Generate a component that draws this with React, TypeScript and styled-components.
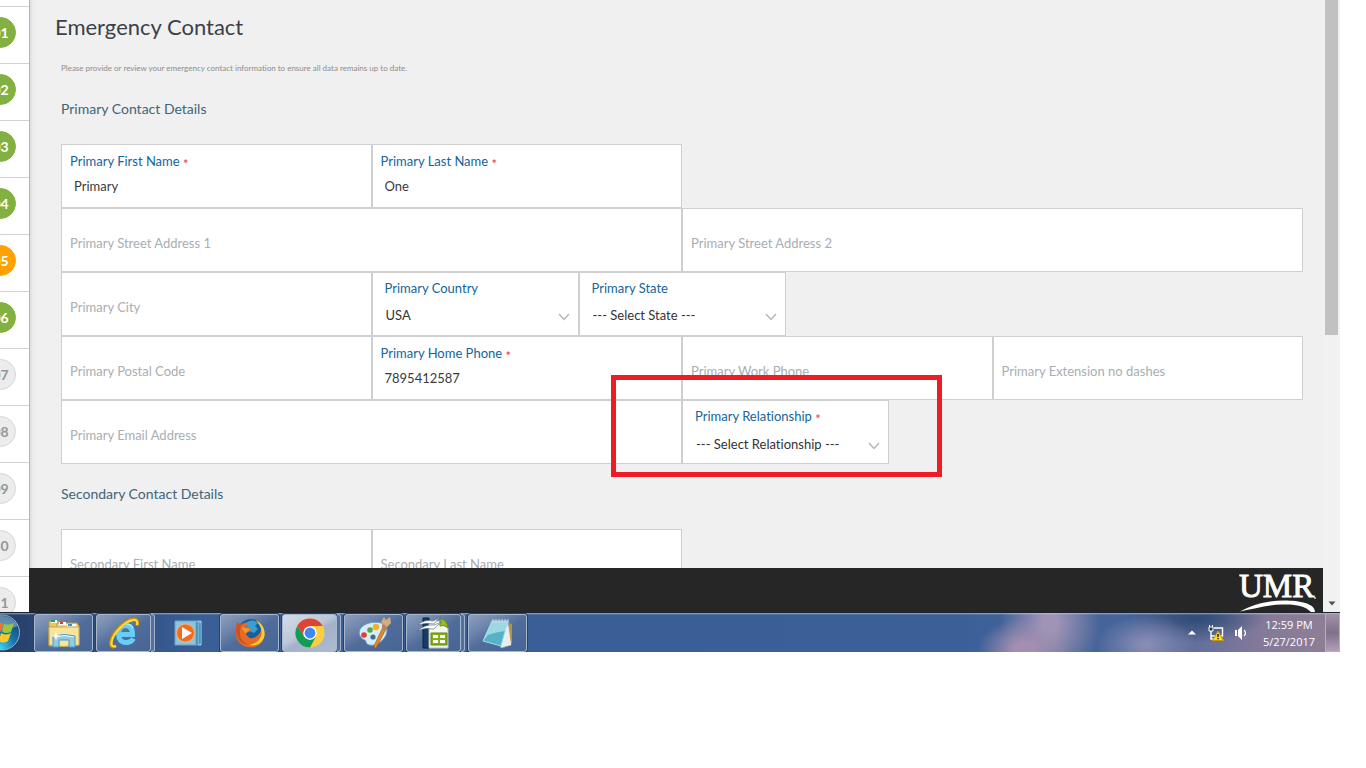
import type { ReactNode } from 'react';
import styled, { createGlobalStyle } from 'styled-components';

const GlobalStyle = createGlobalStyle`
    * {
        box-sizing: border-box;
    }
    body {
        margin: 0;
        background: #ffffff;
        font-family: Lato, 'Liberation Sans', sans-serif;
        font-variant-ligatures: none;
    }
`;

const Screen = styled.div`
    margin-right: 26px;
`;

const Browser = styled.div`
    display: flex;
    height: calc(100vh - 156px);
    min-height: 300px;
    overflow: hidden;
    background: #f0f0f0;
`;

const Sidebar = styled.nav`
    flex: none;
    width: 29px;
    padding-top: 6px;
    overflow: hidden;
    background: #ffffff;
`;

const StepList = styled.ol`
    list-style: none;
    margin: 0;
    padding: 0;
    border-top: 1px solid #d2d2d2;
`;

const StepItem = styled.li`
    height: 57px;
    padding-top: 10px;
    border-bottom: 1px solid #d2d2d2;
`;

const stepColors: any = {
    done: { background: '#83b141', border: '#83b141', text: '#ffffff' },
    current: { background: '#ffa200', border: '#ffa200', text: '#ffffff' },
    todo: { background: '#ececec', border: '#d6d6d6', text: '#969696' },
};

const StepLink = styled.a<{ $state: string }>`
    display: flex;
    align-items: center;
    justify-content: center;
    width: 31px;
    height: 31px;
    margin-left: -15px;
    border-radius: 50%;
    border: 1px solid ${(props) => stepColors[props.$state].border};
    background: ${(props) => stepColors[props.$state].background};
    color: ${(props) => stepColors[props.$state].text};
    font-size: 14px;
    font-weight: 700;
    text-decoration: none;
`;

const Main = styled.div`
    display: flex;
    flex: 1;
    flex-direction: column;
    min-width: 0;
`;

const Content = styled.main`
    flex: 1;
    min-height: 0;
    overflow: hidden;
    padding: 13px 20px 0 26px;
    background: linear-gradient(90deg, #b0b3b5 0, #b4b7b9 1px, #dcdddf 1px, #ebebeb 4px, #f0f0f0 8px);
`;

const Title = styled.h1`
    margin: 0 0 21px;
    color: #3c4048;
    font-size: 22px;
    font-weight: 400;
    line-height: 28px;
`;

const Body = styled.div`
    margin-left: 6px;
`;

const Note = styled.p`
    margin: 0 0 5px;
    color: #8c8c8c;
    font-size: 8px;
    line-height: 12px;
`;

const SectionTitle = styled.h2`
    margin: 0;
    padding: 20px 0 25px;
    color: #41647a;
    font-size: 14px;
    font-weight: 400;
    line-height: 20px;
`;

const Row = styled.div`
    display: grid;
    grid-template-columns: repeat(12, minmax(0, 1fr));
`;

const Cell = styled.div<{ $span: number }>`
    position: relative;
    grid-column: span ${(props) => props.$span};
    height: 64px;
    background: #ffffff;
    border: 1px solid #cfcfcf;
`;

const Label = styled.label<{ $inset?: boolean }>`
    display: block;
    padding: ${(props) => (props.$inset ? '6px 12px 0' : '7px 8px 0')};
    color: #12659a;
    font-size: 13px;
    line-height: 18px;
    white-space: nowrap;
`;

const Required = styled.span`
    color: #f5323c;
    font-size: 13px;
    line-height: 1;
    vertical-align: -3px;
`;

const Input = styled.input`
    display: block;
    width: 100%;
    height: 32px;
    padding: 0 12px 2px;
    border: 0;
    outline: 0;
    background: transparent;
    color: #3b3b3b;
    font-family: inherit;
    font-size: 13px;
    font-variant-ligatures: none;
`;

const BlankInput = styled(Input)`
    height: 100%;
    padding: 6px 8px 0;

    &::placeholder {
        color: #a8aeb2;
        opacity: 1;
    }
`;

const SelectWrap = styled.div`
    display: flex;
    align-items: center;
    height: 36px;
    padding-right: 8px;
`;

const Select = styled.select`
    flex: 1;
    min-width: 0;
    height: 32px;
    padding: 0 0 1px 13px;
    border: 0;
    appearance: none;
    background: transparent;
    color: #333333;
    font-family: inherit;
    font-size: 13px;
    font-variant-ligatures: none;
`;

const Highlight = styled.div`
    position: absolute;
    inset: -26px -54px -14px -72px;
    z-index: 2;
    border: 5px solid #ee1c24;
    pointer-events: none;
`;

const Footer = styled.footer`
    display: flex;
    flex: none;
    justify-content: flex-end;
    height: 44px;
    padding-right: 6px;
    background: #262626;
`;

const ScrollTrack = styled.div`
    display: flex;
    flex: none;
    flex-direction: column;
    justify-content: space-between;
    align-items: center;
    width: 17px;
    background: #f1f1f1;
`;

const ScrollThumb = styled.div`
    width: 13px;
    height: 335px;
    background: #c1c1c1;
`;

const ScrollDown = styled.button`
    display: flex;
    align-items: center;
    justify-content: center;
    width: 17px;
    height: 17px;
    padding: 0;
    border: 0;
    background: transparent;
`;

const Taskbar = styled.div`
    display: flex;
    align-items: center;
    height: 40px;
    overflow: hidden;
    border-top: 1px solid #1c2432;
    background:
        linear-gradient(180deg, rgba(190, 205, 225, 0.7) 0, rgba(190, 205, 225, 0) 2px),
        radial-gradient(ellipse 46px 30px at 1024px 36px, #a48fb0 20%, transparent 100%),
        radial-gradient(ellipse 50px 60px at 1050px 10px, #a094b6 15%, transparent 100%),
        radial-gradient(ellipse 50px 30px at 1146px 32px, #8a8db5 5%, transparent 100%),
        radial-gradient(ellipse 70px 26px at 1196px 4px, #334e78 15%, transparent 100%),
        linear-gradient(90deg, #263f69 0, #3a5e96 200px, #3a5f97 600px, #3b6098 960px, #466499 1080px, #45649b 1130px, #65709b 1200px, #84799a 1260px, #8f8094 1340px);
`;

const StartButton = styled.button`
    flex: none;
    width: 34px;
    height: 39px;
    padding: 0;
    border: 0;
    background: transparent;
`;

const TaskList = styled.div`
    display: flex;
    flex: 1;
    gap: 3px;
    height: 38px;
`;

const frames: any = {
    open: 'linear-gradient(150deg, #8e9fbd 0, #6d84ac 30%, #506c9a 52%, #466595 100%)',
    active: 'linear-gradient(150deg, #d5dce8 0, #bcc7d8 44%, #a3b1c9 56%, #aebcd2 100%)',
    idle: 'transparent',
};

const TaskSlot = styled.div`
    display: flex;
    flex: none;
    width: 59px;
`;

const TaskButton = styled.button<{ $kind: string }>`
    display: flex;
    flex: 1;
    align-items: center;
    justify-content: center;
    padding: 0;
    border: 1px solid ${(props) => (props.$kind === 'idle' ? 'transparent' : '#a9b7cd')};
    border-radius: 3px;
    background: ${(props) => frames[props.$kind]};
    box-shadow: ${(props) => (props.$kind === 'idle' ? 'none' : '0 0 0 1px #26416d')};
`;

const StackEdge = styled.div`
    width: 4px;
    border: 1px solid #a3b2ca;
    border-left: 0;
    border-radius: 0 3px 3px 0;
    background: #54709d;
`;

const Tray = styled.div`
    display: flex;
    flex: none;
    align-items: center;
`;

const TrayButton = styled.button<{ $width: number }>`
    display: flex;
    align-items: center;
    justify-content: center;
    width: ${(props) => props.$width}px;
    height: 24px;
    padding: 0;
    border: 0;
    background: transparent;
`;

const Clock = styled.div`
    width: 72px;
    color: #ffffff;
    font-family: 'Open Sans', 'Noto Sans', sans-serif;
    font-size: 11px;
    line-height: 17px;
    text-align: center;
`;

const ShowDesktop = styled.button`
    width: 15px;
    height: 39px;
    padding: 0;
    border: 1px solid #b9adbd;
    background: linear-gradient(180deg, #a294a5 0, #80708a 50%, #b39dba 100%);
`;

const Chevron = () => (
    <svg width="12" height="12" viewBox="0 0 12 12" fill="none" stroke="#b5b5b5" strokeWidth="1.4">
        <path d="M1 5 6 10.500 11 5" />
    </svg>
);

const UmrLogo = () => (
    <svg width="78" height="44" viewBox="0 0 78 44" role="img" aria-label="UMR">
        <text
            x="0"
            y="29"
            fill="#ffffff"
            stroke="#ffffff"
            strokeWidth="0.9"
            fontFamily="'Liberation Serif', serif"
            fontSize="33"
        >
            UMR
        </text>
        <circle cx="76" cy="30" r="0.9" fill="#d8d8d8" />
        <path
            d="M1 43.500C13 37 28 32.500 45 32.500C61 32.500 76 35.500 76 44H72C66 38 57 36 43 36.500C27 37 15 41 1 43.500Z"
            fill="#ffffff"
        />
    </svg>
);

const StartIcon = () => (
    <svg width="34" height="39" viewBox="0 0 34 39">
        <defs>
            <radialGradient id="orb" cx="0.45" cy="0.95" r="0.95">
                <stop offset="0" stopColor="#3ed3f4" />
                <stop offset="0.45" stopColor="#1777ac" />
                <stop offset="1" stopColor="#173f6b" />
            </radialGradient>
        </defs>
        <circle cx="2" cy="19.5" r="17.5" fill="url(#orb)" stroke="#8fb2cd" />
        <path d="M-15 13A18 17 0 0 1 18 13Q4 19-15 18Z" fill="#bbd5e5" opacity="0.45" />
        <path d="M-8 12Q-3 7 3 11L1 19Q-4 16-10 19Z" fill="#f27226" />
        <path d="M4 11Q9 13 14 10L11 19Q7 21 2 19Z" fill="#97c93d" />
        <path d="M-10 21Q-4 17 0 20L-2 28Q-7 25-12 28Z" fill="#3fa4e8" />
        <path d="M1 20Q6 23 11 20L8 28Q3 31-1 28Z" fill="#ffc829" />
    </svg>
);

const ExplorerIcon = () => (
    <svg width="34" height="32" viewBox="0 0 34 32">
        <path d="M2 4H11L13 7H23V29H2Z" fill="#e5c768" stroke="#b99740" />
        <path d="M4 3h6v3H4z" fill="#fff" />
        <path d="M4 3h4v2H4z" fill="#24a148" />
        <path d="M10 6H30L32 9V28H10Z" fill="#f0d780" stroke="#bd9a43" />
        <path d="M12 5h7v3h-7z" fill="#fff" />
        <path d="M13 5h3v2h-3z" fill="#d63d27" />
        <path d="M20 7h9v3h-9z" fill="#fff" />
        <path d="M21 7h4v2h-4z" fill="#2f91d0" />
        <path d="M2 10H32V28Q16 31 2 28Z" fill="#f7e59e" stroke="#c9a64c" />
        <path d="M6 19Q18 16 28 19V30H22V23H12V30H6Z" fill="#8fcbe2" stroke="#4b99bd" />
        <path d="M7 20Q17 17 27 20" stroke="#e6faff" fill="none" />
        <path d="M9 14 10 18 14 19 10 20 9 24 8 20 4 19 8 18Z" fill="#fff" />
    </svg>
);

const ExplorerBrowserIcon = () => (
    <svg width="32" height="32" viewBox="0 0 32 32" fill="none">
        <path d="M26 19.500H11M26 19.500C27 10 24 6 18 6C12 6 8 10 8 17C8 24 12 27 17 27C22 27 25 25 26 22" stroke="#257fb8" strokeWidth="1" />
        <path
            d="M11 17.500H24.500C24.500 11 22 8.500 17.500 8.500C13 8.500 10.500 12 10.500 17C10.500 22.500 13.500 25.500 18 25.500C21.500 25.500 24 24 25.500 21.500"
            stroke="#68cef5"
            strokeWidth="5"
        />
        <path d="M10 12C12 8 15 7 18 7C21 7 24 8 25 11" stroke="#b9edff" strokeWidth="1.2" />
        <path d="M8 29C0 33 1 21 11 11C20 2 32-2 29 9" stroke="#c68a00" strokeWidth="3.5" />
        <path d="M8 29C1 32 2 21 12 11C20 3 31-1 29 8" stroke="#ffdb38" strokeWidth="2.2" />
    </svg>
);

const MediaIcon = () => (
    <svg width="30" height="28" viewBox="0 0 30 28">
        <path d="M12 3 28 2V26L12 25Z" fill="#6fb2d6" stroke="#a7d8ed" />
        <path d="M2 2H23V26H2Z" fill="#8fc4dc" stroke="#62a6c9" />
        <path d="M24 3V26M27 4V25" stroke="#337fac" />
        <circle cx="12.5" cy="14" r="9" fill="#f26b21" stroke="#ffad72" />
        <path d="M9 8 19 14 9 20Z" fill="#ffffff" />
    </svg>
);

const FirefoxIcon = () => (
    <svg width="32" height="32" viewBox="0 0 32 32">
        <circle cx="17" cy="15" r="13" fill="#1360a3" />
        <path d="M12 6Q18 1 24 6L21 9 24 12 20 16 13 13Z" fill="#3a9fd3" />
        <path
            d="M22 3C33 9 34 27 20 30C9 32 0 24 2 12L3 5 7 8C9 6 12 5 14 6L12 10 17 12C17 15 13 15 12 17C15 23 21 22 25 17C30 11 25 7 22 3Z"
            fill="#e66a22"
        />
        <path d="M22 3C31 8 33 18 28 24C25 28 20 29 15 28C21 27 25 24 27 19C29 13 26 8 22 3Z" fill="#ffcd35" />
        <path d="M2 13 3 5 7 8 6 14C5 23 11 27 17 28C7 29 2 21 2 13Z" fill="#d14f22" />
        <path d="M7 10Q11 11 16 12Q14 15 11 16Z" fill="#f69432" />
    </svg>
);

const ChromeIcon = () => (
    <svg width="30" height="30" viewBox="0 0 30 30">
        <circle cx="15" cy="15" r="14.5" fill="#ffcd40" />
        <path d="M2.400 7.700A14.500 14.500 0 0 0 15 29.500L21 18.500 15 22 9 18Z" fill="#0f9d58" />
        <path d="M2.400 7.700A14.500 14.500 0 0 1 27.700 8H15L9 18Z" fill="#db4437" />
        <circle cx="15" cy="15" r="6.8" fill="#ffffff" />
        <circle cx="15" cy="15" r="5.4" fill="#4285f4" />
    </svg>
);

const PaintIcon = () => (
    <svg width="34" height="32" viewBox="0 0 34 32">
        <path
            d="M3 19C-1 10 12 3 24 6C34 9 30 21 22 26C16 30 9 28 9 25C9 22 6 24 3 19Z"
            fill="#d7edf8"
            stroke="#719fc2"
        />
        <circle cx="7" cy="18" r="2.8" fill="#dd4038" />
        <circle cx="13" cy="13" r="2.8" fill="#57a83c" />
        <circle cx="19" cy="10" r="3.2" fill="#f2b127" />
        <circle cx="16" cy="20" r="2.6" fill="#496892" />
        <path d="M26 10 29 12 19 31Q17 32 17 29Z" fill="#e28a29" stroke="#a75b19" strokeWidth="0.7" />
        <path d="M25 7 31 9 28 14 25 12Z" fill="#b2845e" />
        <path d="M24 5 27 0 29 3 33 0 34 6 30 10Z" fill="#d6ac7d" />
    </svg>
);

const CalcIcon = () => (
    <svg width="34" height="34" viewBox="0 0 34 34">
        <path d="M6 2H12V32H6Z" fill="#173b62" stroke="#0d223b" />
        <path d="M12 5H25L31 12V32H12Z" fill="#f4f6ef" stroke="#b6c1bd" />
        <path d="M23 3Q30 3 31 12Q27 8 23 10Z" fill="#94c11f" stroke="#688d0e" />
        <path
            d="M1 9Q7 3 16 5L24 1Q19 4 17 8Q10 6 1 9ZM0 15Q8 8 17 9L25 6Q19 10 17 13Q8 11 0 15Z"
            fill="#ffffff"
            stroke="#536782"
            strokeWidth="0.6"
        />
        <path d="M14 17H30V29H14Z" fill="#86af11" stroke="#65890c" />
        <path d="M16 19H21V22H16ZM23 19H28V22H23ZM16 24H21V27H16ZM23 24H28V27H23Z" fill="#ffffff" />
    </svg>
);

const NotepadIcon = () => (
    <svg width="34" height="32" viewBox="0 0 34 32">
        <path d="M28 6 31 7V26L25 29Z" fill="#b79249" />
        <path d="M25 4 30 28 20 31 16 6Z" fill="#f2f3f0" stroke="#a5b0b1" strokeWidth="0.7" />
        <path d="M11 4H27L20 29 2 24Z" fill="#55b2c8" stroke="#9ce0ea" />
        <path d="M11 4H27L24 14Q15 15 7 18L2 24Z" fill="#b3e4e9" opacity="0.75" />
        <path d="M27 5 30 28 21 29Z" fill="#e6eeee" />
        <path d="M12 2V6M15 2V6M18 2V6M21 2V6M24 2V6M27 2V6" stroke="#d5d7d7" />
    </svg>
);

const NetworkIcon = () => (
    <svg width="18" height="18" viewBox="0 0 18 18">
        <path d="M7 4H15.500V12H12M4 7V15H10M4 12H8" fill="none" stroke="#ffffff" strokeWidth="1.4" />
        <path d="M2 3H6V7H2ZM2.500 1V3M5.500 1V3" fill="#27394e" stroke="#ffffff" />
        <path d="M11 7 16.500 16.500H5.500Z" fill="#ffda2b" stroke="#c7980b" />
        <path d="M11 10V13M11 14V15.200" stroke="#292100" strokeWidth="1.5" />
    </svg>
);

const VolumeIcon = () => (
    <svg width="16" height="16" viewBox="0 0 16 16">
        <path d="M2 5H4V11H2ZM5 5 9 1V15L5 11Z" fill="#ffffff" />
        <path d="M11 5Q14 8 11 11" fill="none" stroke="#ffffff" strokeWidth="1.2" />
    </svg>
);

const ArrowIcon = ({ up, color }: { up?: boolean; color: string }) => (
    <svg width="8" height="5" viewBox="0 0 8 5">
        <path d={up ? 'M0 4.500 4 0.500 8 4.500Z' : 'M0.500 0.500H7.500L4 4.500Z'} fill={color} />
    </svg>
);

interface FieldProps {
    id: string;
    label: string;
    span: number;
    value?: string;
    required?: boolean;
}

const TextField = ({ id, label, span, value, required }: FieldProps) => (
    <Cell $span={span}>
        {value ? (
            <>
                <Label htmlFor={id}>
                    {label} {required && <Required>*</Required>}
                </Label>
                <Input id={id} defaultValue={value} />
            </>
        ) : (
            <BlankInput id={id} aria-label={label} placeholder={label} />
        )}
    </Cell>
);

const SelectField = ({ id, label, span, value, required, children }: FieldProps & { children?: ReactNode }) => (
    <Cell $span={span}>
        <Label htmlFor={id} $inset>
            {label} {required && <Required>*</Required>}
        </Label>
        <SelectWrap>
            <Select id={id} defaultValue={value}>
                <option>{value}</option>
            </Select>
            <Chevron />
        </SelectWrap>
        {children}
    </Cell>
);

const steps = [
    ['01', 'done'],
    ['02', 'done'],
    ['03', 'done'],
    ['04', 'done'],
    ['05', 'current'],
    ['06', 'done'],
    ['07', 'todo'],
    ['08', 'todo'],
    ['09', 'todo'],
    ['10', 'todo'],
    ['11', 'todo'],
];

const tasks = [
    { name: 'Explorer', icon: <ExplorerIcon />, kind: 'open' },
    { name: 'Internet Explorer', icon: <ExplorerBrowserIcon />, kind: 'open', stacked: true },
    { name: 'Media Player', icon: <MediaIcon />, kind: 'idle' },
    { name: 'Firefox', icon: <FirefoxIcon />, kind: 'open' },
    { name: 'Chrome', icon: <ChromeIcon />, kind: 'active', stacked: true },
    { name: 'Paint', icon: <PaintIcon />, kind: 'open' },
    { name: 'Calc', icon: <CalcIcon />, kind: 'open', stacked: true },
    { name: 'Notepad', icon: <NotepadIcon />, kind: 'open' },
];

const App = () => (
    <Screen>
        <GlobalStyle />
        <Browser>
            <Sidebar>
                <StepList>
                    {steps.map(([step, state]) => (
                        <StepItem key={step}>
                            <StepLink href={`#step-${step}`} $state={state}>
                                {step}
                            </StepLink>
                        </StepItem>
                    ))}
                </StepList>
            </Sidebar>
            <Main>
                <Content>
                    <Title>Emergency Contact</Title>
                    <Body>
                        <Note>
                            Please provide or review your emergency contact information to ensure all data remains up to
                            date.
                        </Note>
                        <SectionTitle>Primary Contact Details</SectionTitle>
                        <Row>
                            <TextField id="first" label="Primary First Name" span={3} value="Primary" required />
                            <TextField id="last" label="Primary Last Name" span={3} value="One" required />
                        </Row>
                        <Row>
                            <TextField id="street1" label="Primary Street Address 1" span={6} />
                            <TextField id="street2" label="Primary Street Address 2" span={6} />
                        </Row>
                        <Row>
                            <TextField id="city" label="Primary City" span={3} />
                            <SelectField id="country" label="Primary Country" span={2} value="USA" />
                            <SelectField id="state" label="Primary State" span={2} value="--- Select State ---" />
                        </Row>
                        <Row>
                            <TextField id="postal" label="Primary Postal Code" span={3} />
                            <TextField id="home" label="Primary Home Phone" span={3} value="7895412587" required />
                            <TextField id="work" label="Primary Work Phone" span={3} />
                            <TextField id="extension" label="Primary Extension no dashes" span={3} />
                        </Row>
                        <Row>
                            <TextField id="email" label="Primary Email Address" span={6} />
                            <SelectField
                                id="relationship"
                                label="Primary Relationship"
                                span={2}
                                value="--- Select Relationship ---"
                                required
                            >
                                <Highlight />
                            </SelectField>
                        </Row>
                        <SectionTitle>Secondary Contact Details</SectionTitle>
                        <Row>
                            <TextField id="first2" label="Secondary First Name" span={3} />
                            <TextField id="last2" label="Secondary Last Name" span={3} />
                        </Row>
                    </Body>
                </Content>
                <Footer>
                    <UmrLogo />
                </Footer>
            </Main>
            <ScrollTrack>
                <ScrollThumb />
                <ScrollDown aria-label="Scroll down">
                    <ArrowIcon color="#505050" />
                </ScrollDown>
            </ScrollTrack>
        </Browser>
        <Taskbar>
            <StartButton aria-label="Start">
                <StartIcon />
            </StartButton>
            <TaskList>
                {tasks.map(({ name, icon, kind, stacked }) => (
                    <TaskSlot key={name}>
                        <TaskButton aria-label={name} $kind={kind}>
                            {icon}
                        </TaskButton>
                        {stacked && <StackEdge />}
                    </TaskSlot>
                ))}
            </TaskList>
            <Tray>
                <TrayButton aria-label="Show hidden icons" $width={22}>
                    <ArrowIcon up color="#ffffff" />
                </TrayButton>
                <TrayButton aria-label="Network" $width={26}>
                    <NetworkIcon />
                </TrayButton>
                <TrayButton aria-label="Volume" $width={24}>
                    <VolumeIcon />
                </TrayButton>
                <Clock>
                    12:59 PM
                    <br />
                    5/27/2017
                </Clock>
                <ShowDesktop aria-label="Show desktop" />
            </Tray>
        </Taskbar>
    </Screen>
);

export default App;
